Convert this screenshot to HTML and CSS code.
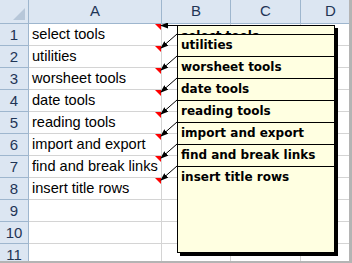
FILE: index.html
```html
<!doctype html>
<html>
<head>
    <title>Comments</title>
    <link rel="stylesheet" href="styles.css">
</head>
<body>
    <div class="sheet">
        <div class="grid">
            <div class="hd corner"><span class="tri"></span></div>
            <div class="hd col">A</div>
            <div class="hd col">B</div>
            <div class="hd col">C</div>
            <div class="hd col last">D</div>

            <div class="hd row">1</div><div class="cell note">select tools</div><div class="cell"></div><div class="cell"></div><div class="cell"></div>
            <div class="hd row">2</div><div class="cell note">utilities</div><div class="cell"></div><div class="cell"></div><div class="cell"></div>
            <div class="hd row">3</div><div class="cell note">worsheet tools</div><div class="cell"></div><div class="cell"></div><div class="cell"></div>
            <div class="hd row">4</div><div class="cell note">date tools</div><div class="cell"></div><div class="cell"></div><div class="cell"></div>
            <div class="hd row">5</div><div class="cell note">reading tools</div><div class="cell"></div><div class="cell"></div><div class="cell"></div>
            <div class="hd row">6</div><div class="cell note">import and export</div><div class="cell"></div><div class="cell"></div><div class="cell"></div>
            <div class="hd row">7</div><div class="cell note">find and break links</div><div class="cell"></div><div class="cell"></div><div class="cell"></div>
            <div class="hd row">8</div><div class="cell note">insert title rows</div><div class="cell"></div><div class="cell"></div><div class="cell"></div>
            <div class="hd row">9</div><div class="cell"></div><div class="cell"></div><div class="cell"></div><div class="cell"></div>
            <div class="hd row">10</div><div class="cell"></div><div class="cell"></div><div class="cell"></div><div class="cell"></div>
            <div class="hd row">11</div><div class="cell"></div><div class="cell"></div><div class="cell"></div><div class="cell"></div>
        </div>

        <!-- comment arrows -->
        <svg class="arrows" width="349" height="261">
            <defs>
                <marker id="head" markerWidth="8" markerHeight="6" refX="7" refY="3" orient="auto" markerUnits="userSpaceOnUse">
                    <path d="M0,0 L8,3 L0,6 Z" fill="#000"/>
                </marker>
            </defs>
            <g stroke="#000" stroke-width="1" fill="none" marker-end="url(#head)">
                <line x1="177" y1="25.5" x2="161" y2="25.5"/>
                <line x1="177" y1="34" x2="161" y2="48"/>
                <line x1="177" y1="56" x2="161" y2="70"/>
                <line x1="177" y1="78" x2="161" y2="92"/>
                <line x1="177" y1="100" x2="161" y2="114"/>
                <line x1="177" y1="122" x2="161" y2="136"/>
                <line x1="177" y1="144" x2="161" y2="158"/>
                <line x1="177" y1="166" x2="161" y2="180"/>
            </g>
        </svg>

        <div class="comment" style="top: 25px">select tools</div>
        <div class="comment" style="top: 34px">utilities</div>
        <div class="comment" style="top: 56px">worsheet tools</div>
        <div class="comment" style="top: 78px">date tools</div>
        <div class="comment" style="top: 100px">reading tools</div>
        <div class="comment" style="top: 122px">import and export</div>
        <div class="comment" style="top: 144px">find and break links</div>
        <div class="comment" style="top: 166px">insert title rows</div>
    </div>
</body>
</html>
```

FILE: styles.css
```css
body {
    margin: 0;
    background-color: #b4b4b4;
    font-family: "Liberation Sans", Arial, sans-serif;
}
.sheet {
    position: relative;
    width: 349px;
    height: 261px;
    overflow: hidden;
    background-color: #fff;
}
.grid {
    display: grid;
    grid-template-columns: 29px 133px 69px 70px 60px;
    grid-template-rows: 24px repeat(11, 22px);
}
.grid > div {
    box-sizing: border-box;
    border-right: 1px solid #d4d4d4;
    border-bottom: 1px solid #d4d4d4;
}
.hd {
    background-color: #dce6f2;
    color: #1f3556;
    font-size: 15px;
    text-align: center;
    line-height: 22px;
}
.grid > .hd {
    border-color: #9eb6ce;
}
.grid > .row {
    border-bottom-color: #9eb6ce;
    border-right-color: #9eb6ce;
    line-height: 21px;
}
.corner {
    position: relative;
}
.tri {
    position: absolute;
    right: 3px;
    bottom: 3px;
    width: 0;
    height: 0;
    border-left: 12px solid transparent;
    border-bottom: 12px solid #b7c7d9;
}
.cell {
    position: relative;
    font-size: 14.6px;
    line-height: 21px;
    padding-left: 3px;
    color: #000;
    white-space: nowrap;
}
.note::after {
    content: "";
    position: absolute;
    right: 0;
    top: 0;
    width: 0;
    height: 0;
    border-left: 6px solid transparent;
    border-top: 6px solid #ff0000;
}
.arrows {
    position: absolute;
    left: 0;
    top: 0;
}
.comment {
    position: absolute;
    left: 177px;
    width: 158px;
    height: 87px;
    box-sizing: border-box;
    border: 1px solid #000;
    background-color: #ffffe1;
    box-shadow: 3px 3px 0 #000;
    font-family: "DejaVu Sans", sans-serif;
    font-weight: bold;
    font-size: 12px;
    line-height: 15px;
    padding: 3px 3px 2px;
    color: #000;
    white-space: nowrap;
}
```
